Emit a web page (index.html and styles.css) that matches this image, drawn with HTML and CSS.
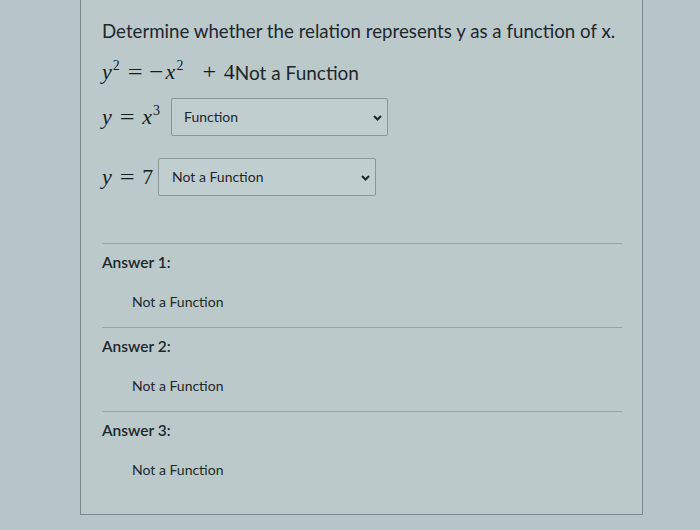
FILE: index.html
```html
<!DOCTYPE html>
<html>
<head>
<meta charset="utf-8">
<link rel="stylesheet" href="styles.css">
</head>
<body>
<div class="card">
  <p class="question">Determine whether the relation represents y as a function of x.</p>
  <div class="line first">
    <span class="math"><i>y</i><sup>2</sup><span class="rel">=</span><span class="neg">−</span><i>x</i><sup>2</sup><span class="bin">+</span><span class="four">4</span></span><span class="txt">Not a Function</span>
  </div>
  <div class="line sel-row row1">
    <span class="math m1"><i>y</i><span class="rel">=</span><i>x</i><sup>3</sup></span>
    <div class="select s1"><span>Function</span><svg class="chev" width="9" height="6" viewBox="0 0 9 6"><path d="M1 1 L4.5 4.5 L8 1" fill="none" stroke="#1d262b" stroke-width="2"/></svg></div>
  </div>
  <div class="line sel-row row2">
    <span class="math m2"><i>y</i><span class="rel">=</span>7</span>
    <div class="select s2"><span>Not a Function</span><svg class="chev" width="9" height="6" viewBox="0 0 9 6"><path d="M1 1 L4.5 4.5 L8 1" fill="none" stroke="#1d262b" stroke-width="2"/></svg></div>
  </div>
  <div class="answers">
    <div class="answer">
      <div class="label">Answer 1:</div>
      <div class="value">Not a Function</div>
    </div>
    <div class="answer">
      <div class="label">Answer 2:</div>
      <div class="value">Not a Function</div>
    </div>
    <div class="answer">
      <div class="label">Answer 3:</div>
      <div class="value">Not a Function</div>
    </div>
  </div>
</div>
</body>
</html>
```
FILE: styles.css
```css
html, body {
  margin: 0;
  padding: 0;
}
body {
  width: 700px;
  height: 530px;
  background: #b6c5c7;
  font-family: Lato, "Noto Sans", sans-serif;
  color: #1e272c;
  overflow: hidden;
}
.card {
  margin-left: 80px;
  width: 563px;
  height: 515px;
  box-sizing: border-box;
  padding: 0 20px 0 21px;
  border-left: 1px solid #7c898c;
  border-right: 1px solid #7c898c;
  border-bottom: 1px solid #7c898c;
  background: #bbc9cb;
}
.question {
  margin: 0;
  padding-top: 19px;
  font-size: 18.7px;
  line-height: 24px;
  white-space: nowrap;
}
.line {
  display: flex;
  align-items: center;
}
.first {
  margin-top: 17px;
  height: 24px;
}
.math {
  font-family: "Liberation Serif", "DejaVu Serif", serif;
  font-size: 22px;
  white-space: nowrap;
  color: #151d22;
}
.math i {
  font-style: italic;
}
.math sup {
  font-size: 14px;
  vertical-align: 9px;
  line-height: 0;
  font-style: normal;
  margin-left: 1px;
}
.math .rel {
  display: inline-block;
  transform: scaleX(1.2);
  margin: 0 9px 0 9px;
}
.math .neg {
  display: inline-block;
  transform: scaleX(1.15);
  margin-right: 3px;
}
.math .bin {
  display: inline-block;
  transform: scaleX(1.1);
  margin: 0 8px 0 20px;
}
.math .four {
  margin-right: 0;
}
.txt {
  font-size: 19px;
}
.m1 {
  width: 60px;
  margin-right: 9px;
}
.m2 {
  width: 52px;
  margin-right: 4px;
}
.row1 {
  margin-top: 14px;
}
.row2 {
  margin-top: 22px;
}
.select {
  height: 38px;
  box-sizing: border-box;
  border: 1px solid #8a979a;
  border-radius: 2px;
  background: #c1ced0;
  display: flex;
  align-items: center;
  justify-content: space-between;
  padding: 0 5px 0 12px;
  font-size: 14px;
}
.select span {
  margin-top: -2px;
}
.s1 {
  width: 217px;
}
.s2 {
  width: 218px;
  padding-left: 13px;
}
.chev {
  margin-top: 2px;
}
.answers {
  margin-top: 47px;
}
.answer {
  border-top: 1px solid #97a4a7;
  height: 84px;
  box-sizing: border-box;
}
.label {
  font-size: 15.5px;
  font-weight: 600;
  line-height: 20px;
  margin-top: 8px;
}
.value {
  font-size: 14px;
  line-height: 18px;
  margin-top: 21px;
  padding-left: 30px;
}
```
